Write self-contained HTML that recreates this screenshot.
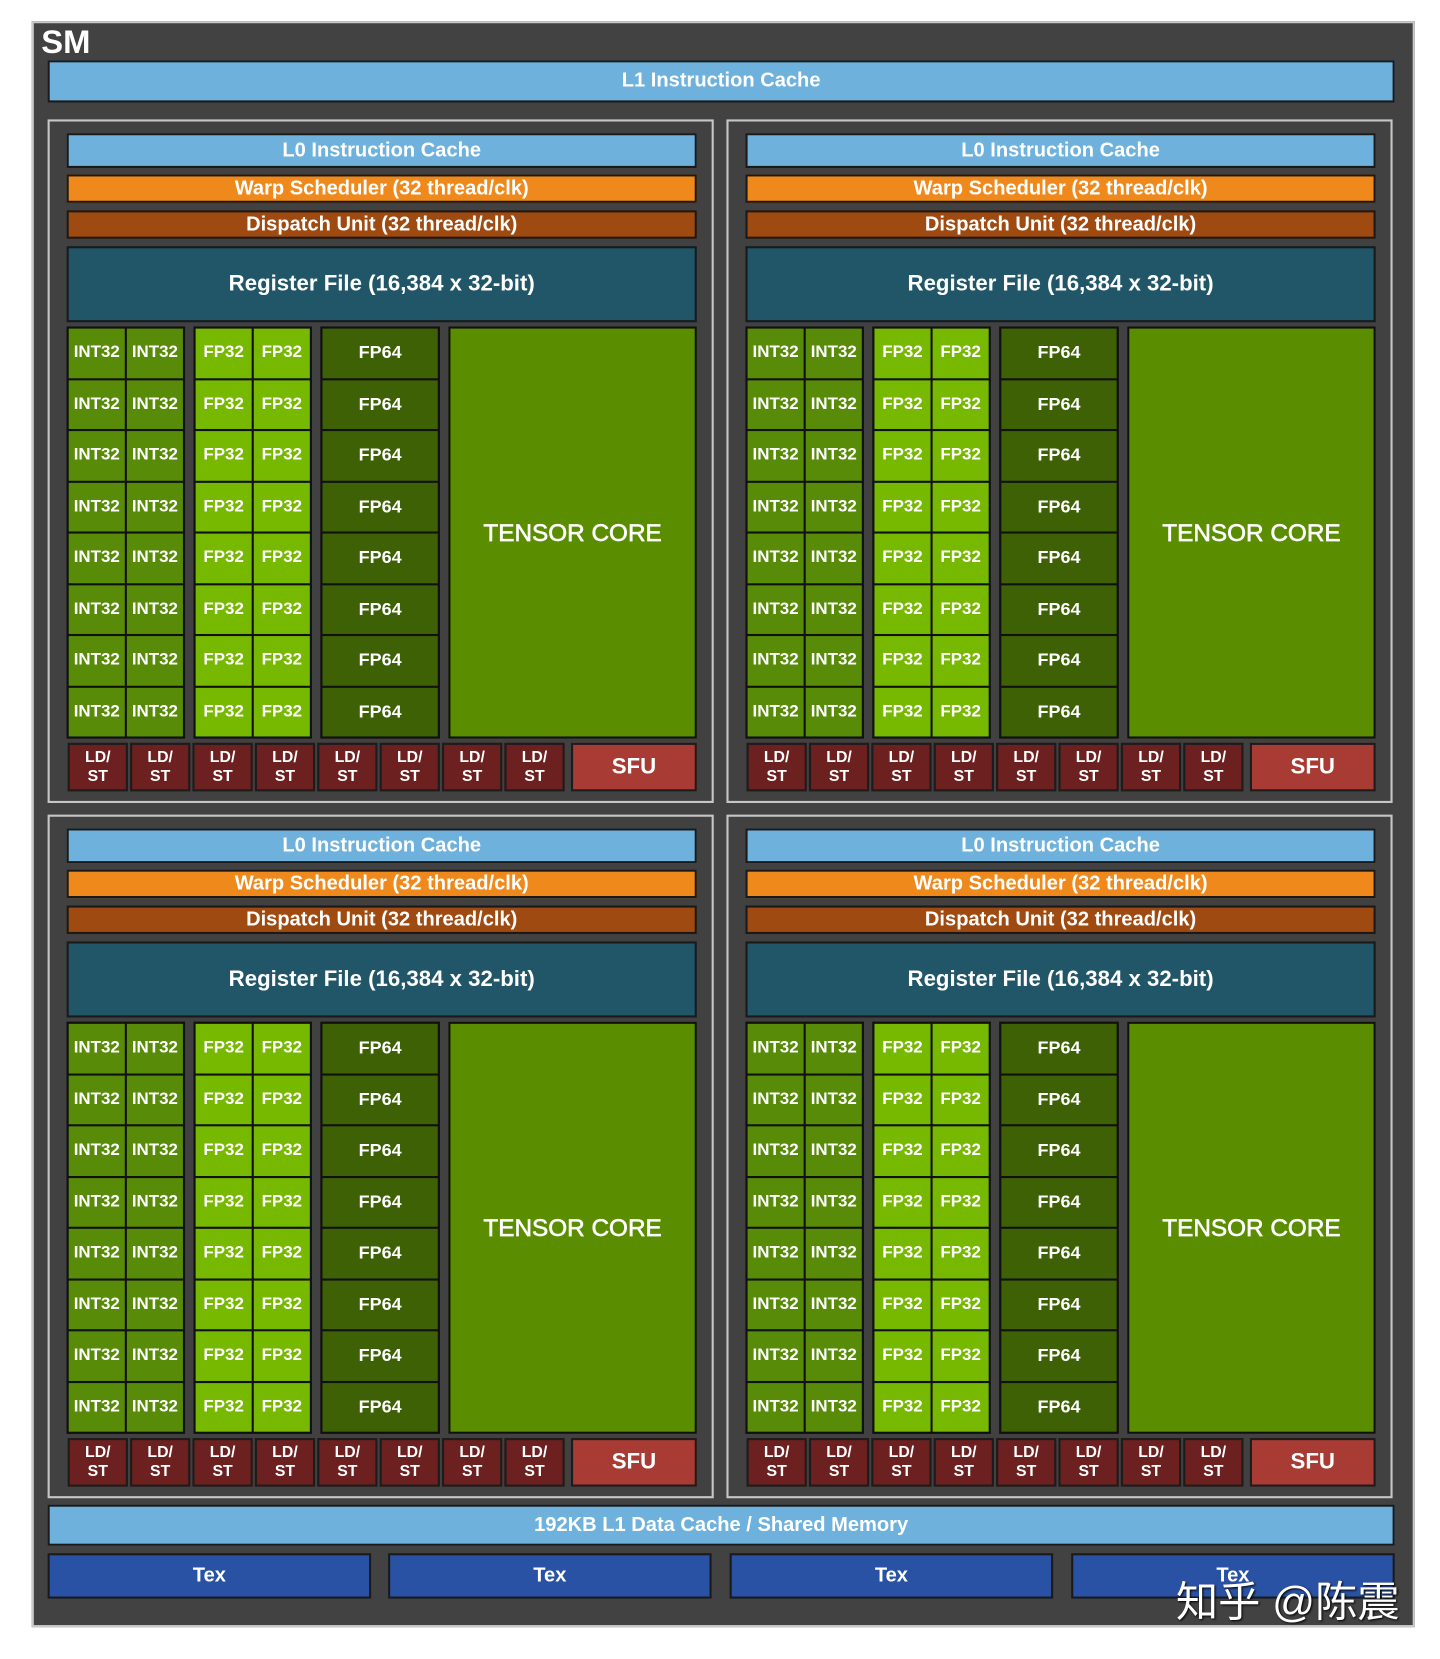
<!DOCTYPE html>
<html><head><meta charset="utf-8"><style>
*{margin:0;padding:0;box-sizing:border-box}
html,body{width:1440px;height:1655px;background:#fff;overflow:hidden}
#w{position:absolute;left:0;top:0;width:1370px;height:1570px;transform-origin:0 0;transform:scale(1.0574,1.0566);font-family:"Liberation Sans",Arial,sans-serif;font-weight:bold;color:#fff}
.a{position:absolute}
.c{display:flex;align-items:center;justify-content:center;text-align:center}
#sm{left:30px;top:20px;width:1308px;height:1520px;background:#424242;border:2px solid #c9c9c9}
.bar{border:2px solid #1a1a1a}
.q{position:absolute;width:630px;height:647px;border:2px solid #c6c6c6;background:#414141}
.l0{left:16px;top:11px;width:596px;height:33px;background:#6eb1dc;font-size:19px}
.wp{left:16px;top:50px;width:596px;height:27px;background:#f0891b;font-size:19px}
.dp{left:16px;top:84px;width:596px;height:27px;background:#9f4a10;font-size:19px}
.rg{left:16px;top:118px;width:596px;height:72px;background:#215668;font-size:21px}
.g{display:grid;grid-template-rows:repeat(8,1fr);border:2px solid #111;background:#111;gap:2px;top:194px;height:390px;font-size:16px}
.g div{display:flex;align-items:center;justify-content:center}
.i{left:16px;width:112px;grid-template-columns:1fr 1fr}
.i div{background:#588b08}
.f{left:136px;width:112px;grid-template-columns:1fr 1fr}
.f div{background:#77b800}
.d{left:256px;width:113px;grid-template-columns:1fr}
.d div{background:#3d6104;font-size:17px}
.t{left:377px;top:194px;width:235px;height:390px;background:#5a8e00;border:2px solid #111;font-size:23px;font-weight:normal;-webkit-text-stroke:0.6px #fff}
.ls{top:588px;width:57px;height:46px;background:#6c2020;border:2px solid #1c1c1c;font-size:15px;line-height:18px}
.sf{top:588px;left:493px;width:119px;height:46px;background:#a83b33;border:2px solid #1c1c1c;font-size:21px}
.tex{top:1470px;height:43px;background:#2a52a4;font-size:19px}
</style></head><body><div id="w">
<div id="sm" class="a"></div>
<div class="a" style="left:39px;top:22px;font-size:31px">SM</div>
<div class="a bar c" style="left:45px;top:57px;width:1274px;height:40px;background:#6eb1dc;font-size:19px">L1 Instruction Cache</div>

<div class="q" style="left:45px;top:113px">
<div class="a bar c l0">L0 Instruction Cache</div><div class="a bar c wp">Warp Scheduler (32 thread/clk)</div><div class="a bar c dp">Dispatch Unit (32 thread/clk)</div><div class="a bar c rg">Register File (16,384 x 32-bit)</div>
<div class="a g i"><div>INT32</div><div>INT32</div><div>INT32</div><div>INT32</div><div>INT32</div><div>INT32</div><div>INT32</div><div>INT32</div><div>INT32</div><div>INT32</div><div>INT32</div><div>INT32</div><div>INT32</div><div>INT32</div><div>INT32</div><div>INT32</div></div>
<div class="a g f"><div>FP32</div><div>FP32</div><div>FP32</div><div>FP32</div><div>FP32</div><div>FP32</div><div>FP32</div><div>FP32</div><div>FP32</div><div>FP32</div><div>FP32</div><div>FP32</div><div>FP32</div><div>FP32</div><div>FP32</div><div>FP32</div></div>
<div class="a g d"><div>FP64</div><div>FP64</div><div>FP64</div><div>FP64</div><div>FP64</div><div>FP64</div><div>FP64</div><div>FP64</div></div>
<div class="a c t">TENSOR CORE</div>
<div class="a c ls" style="left:17px">LD/<br>ST</div><div class="a c ls" style="left:76px">LD/<br>ST</div><div class="a c ls" style="left:135px">LD/<br>ST</div><div class="a c ls" style="left:194px">LD/<br>ST</div><div class="a c ls" style="left:253px">LD/<br>ST</div><div class="a c ls" style="left:312px">LD/<br>ST</div><div class="a c ls" style="left:371px">LD/<br>ST</div><div class="a c ls" style="left:430px">LD/<br>ST</div>
<div class="a c sf">SFU</div>
</div>

<div class="q" style="left:687px;top:113px">
<div class="a bar c l0">L0 Instruction Cache</div><div class="a bar c wp">Warp Scheduler (32 thread/clk)</div><div class="a bar c dp">Dispatch Unit (32 thread/clk)</div><div class="a bar c rg">Register File (16,384 x 32-bit)</div>
<div class="a g i"><div>INT32</div><div>INT32</div><div>INT32</div><div>INT32</div><div>INT32</div><div>INT32</div><div>INT32</div><div>INT32</div><div>INT32</div><div>INT32</div><div>INT32</div><div>INT32</div><div>INT32</div><div>INT32</div><div>INT32</div><div>INT32</div></div>
<div class="a g f"><div>FP32</div><div>FP32</div><div>FP32</div><div>FP32</div><div>FP32</div><div>FP32</div><div>FP32</div><div>FP32</div><div>FP32</div><div>FP32</div><div>FP32</div><div>FP32</div><div>FP32</div><div>FP32</div><div>FP32</div><div>FP32</div></div>
<div class="a g d"><div>FP64</div><div>FP64</div><div>FP64</div><div>FP64</div><div>FP64</div><div>FP64</div><div>FP64</div><div>FP64</div></div>
<div class="a c t">TENSOR CORE</div>
<div class="a c ls" style="left:17px">LD/<br>ST</div><div class="a c ls" style="left:76px">LD/<br>ST</div><div class="a c ls" style="left:135px">LD/<br>ST</div><div class="a c ls" style="left:194px">LD/<br>ST</div><div class="a c ls" style="left:253px">LD/<br>ST</div><div class="a c ls" style="left:312px">LD/<br>ST</div><div class="a c ls" style="left:371px">LD/<br>ST</div><div class="a c ls" style="left:430px">LD/<br>ST</div>
<div class="a c sf">SFU</div>
</div>

<div class="q" style="left:45px;top:771px">
<div class="a bar c l0">L0 Instruction Cache</div><div class="a bar c wp">Warp Scheduler (32 thread/clk)</div><div class="a bar c dp">Dispatch Unit (32 thread/clk)</div><div class="a bar c rg">Register File (16,384 x 32-bit)</div>
<div class="a g i"><div>INT32</div><div>INT32</div><div>INT32</div><div>INT32</div><div>INT32</div><div>INT32</div><div>INT32</div><div>INT32</div><div>INT32</div><div>INT32</div><div>INT32</div><div>INT32</div><div>INT32</div><div>INT32</div><div>INT32</div><div>INT32</div></div>
<div class="a g f"><div>FP32</div><div>FP32</div><div>FP32</div><div>FP32</div><div>FP32</div><div>FP32</div><div>FP32</div><div>FP32</div><div>FP32</div><div>FP32</div><div>FP32</div><div>FP32</div><div>FP32</div><div>FP32</div><div>FP32</div><div>FP32</div></div>
<div class="a g d"><div>FP64</div><div>FP64</div><div>FP64</div><div>FP64</div><div>FP64</div><div>FP64</div><div>FP64</div><div>FP64</div></div>
<div class="a c t">TENSOR CORE</div>
<div class="a c ls" style="left:17px">LD/<br>ST</div><div class="a c ls" style="left:76px">LD/<br>ST</div><div class="a c ls" style="left:135px">LD/<br>ST</div><div class="a c ls" style="left:194px">LD/<br>ST</div><div class="a c ls" style="left:253px">LD/<br>ST</div><div class="a c ls" style="left:312px">LD/<br>ST</div><div class="a c ls" style="left:371px">LD/<br>ST</div><div class="a c ls" style="left:430px">LD/<br>ST</div>
<div class="a c sf">SFU</div>
</div>

<div class="q" style="left:687px;top:771px">
<div class="a bar c l0">L0 Instruction Cache</div><div class="a bar c wp">Warp Scheduler (32 thread/clk)</div><div class="a bar c dp">Dispatch Unit (32 thread/clk)</div><div class="a bar c rg">Register File (16,384 x 32-bit)</div>
<div class="a g i"><div>INT32</div><div>INT32</div><div>INT32</div><div>INT32</div><div>INT32</div><div>INT32</div><div>INT32</div><div>INT32</div><div>INT32</div><div>INT32</div><div>INT32</div><div>INT32</div><div>INT32</div><div>INT32</div><div>INT32</div><div>INT32</div></div>
<div class="a g f"><div>FP32</div><div>FP32</div><div>FP32</div><div>FP32</div><div>FP32</div><div>FP32</div><div>FP32</div><div>FP32</div><div>FP32</div><div>FP32</div><div>FP32</div><div>FP32</div><div>FP32</div><div>FP32</div><div>FP32</div><div>FP32</div></div>
<div class="a g d"><div>FP64</div><div>FP64</div><div>FP64</div><div>FP64</div><div>FP64</div><div>FP64</div><div>FP64</div><div>FP64</div></div>
<div class="a c t">TENSOR CORE</div>
<div class="a c ls" style="left:17px">LD/<br>ST</div><div class="a c ls" style="left:76px">LD/<br>ST</div><div class="a c ls" style="left:135px">LD/<br>ST</div><div class="a c ls" style="left:194px">LD/<br>ST</div><div class="a c ls" style="left:253px">LD/<br>ST</div><div class="a c ls" style="left:312px">LD/<br>ST</div><div class="a c ls" style="left:371px">LD/<br>ST</div><div class="a c ls" style="left:430px">LD/<br>ST</div>
<div class="a c sf">SFU</div>
</div>

<div class="a bar c" style="left:45px;top:1424px;width:1274px;height:39px;background:#6eb1dc;font-size:19px">192KB L1 Data Cache / Shared Memory</div>
<div class="a bar c tex" style="left:45px;width:306px">Tex</div>
<div class="a bar c tex" style="left:367px;width:306px">Tex</div>
<div class="a bar c tex" style="left:690px;width:306px">Tex</div>
<div class="a bar c tex" style="left:1013px;width:306px">Tex</div>
<div class="a" style="left:1112px;top:1484px;font-size:40px;font-weight:normal;font-family:'Liberation Sans','Noto Sans CJK SC',sans-serif;text-shadow:1px 1px 2px #000;white-space:nowrap">知乎 @陈震</div>
</div></body></html>
